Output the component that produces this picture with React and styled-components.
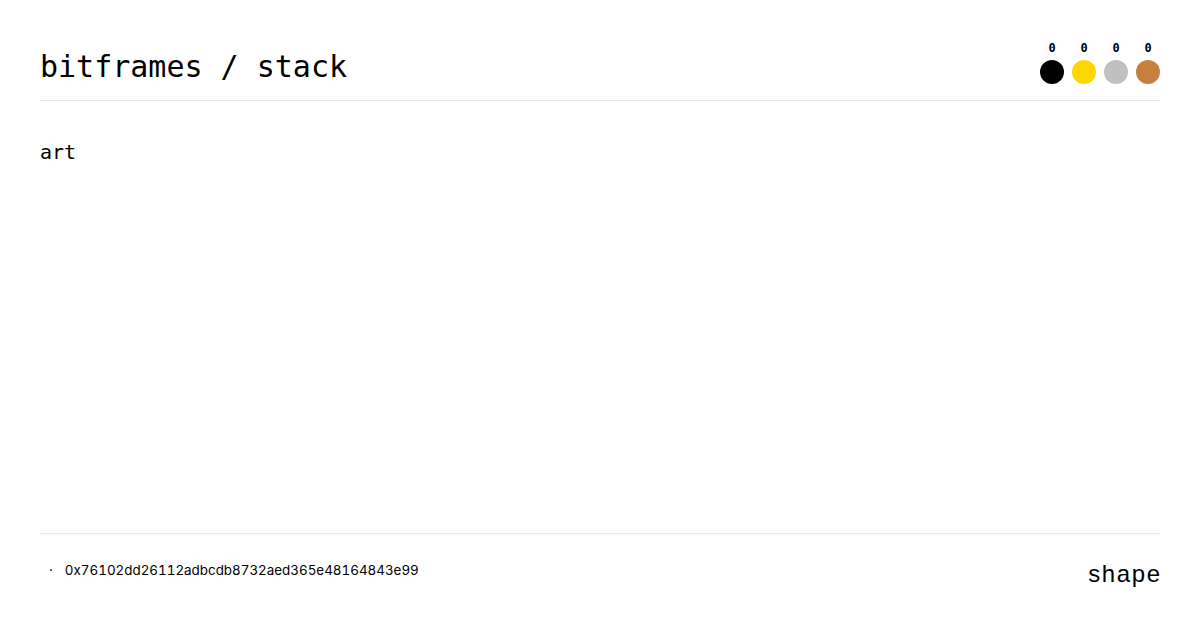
import React from "react";
import styled, { createGlobalStyle } from "styled-components";

const Global = createGlobalStyle`
  html, body { margin: 0; padding: 0; background: #fff; }
  body { font-family: "DejaVu Sans Mono", monospace; color: #000; }
`;

const Page = styled.div`
  box-sizing: border-box;
  width: 1200px;
  height: 630px;
  padding: 40px;
  display: flex;
  flex-direction: column;
`;

const Header = styled.header`
  display: flex;
  justify-content: space-between;
  align-items: flex-end;
  padding-bottom: 16px;
  border-bottom: 1px solid #e6e6e6;
`;

const Title = styled.h1`
  margin: 0;
  font-family: "DejaVu Sans Mono", "Liberation Mono", monospace;
  font-weight: 400;
  font-size: 30px;
  line-height: 34px;
  color: #000;
`;

const Swatches = styled.div`
  display: flex;
  gap: 8px;
`;

const Swatch = styled.div`
  display: flex;
  flex-direction: column;
  align-items: center;
  gap: 4px;
`;

const Count = styled.span`
  font-family: "DejaVu Sans Mono", monospace;
  font-size: 12px;
  line-height: 16px;
  font-weight: 700;
  color: #000;
`;

const Dot = styled.span`
  width: 24px;
  height: 24px;
  border-radius: 50%;
  background: ${(p) => p.$color};
`;

const Content = styled.main`
  flex: 1;
  padding-top: 39px;
`;

const Tag = styled.span`
  font-family: "DejaVu Sans Mono", monospace;
  font-size: 20px;
  line-height: 24px;
  color: #000;
`;

const Footer = styled.footer`
  display: flex;
  justify-content: space-between;
  align-items: flex-start;
  border-top: 1px solid #e6e6e6;
  padding: 26px 0 2px;
`;

const Address = styled.div`
  display: flex;
  align-items: center;
  gap: 12px;
  padding-left: 9px;
  font-family: Inter, sans-serif;
  font-size: 13.4px;
  line-height: 20px;
  color: #000;
  font-variant-numeric: tabular-nums;
`;

const Brand = styled.span`
  font-family: "Liberation Sans", Arial, sans-serif;
  font-size: 24px;
  line-height: 28px;
  letter-spacing: 1.6px;
  margin-right: -1.6px;
  color: #000;
`;

const colors = ["#000000", "#FFD700", "#C0C0C0", "#C4803C"];

export default function App() {
  return (
    <>
      <Global />
      <Page>
        <Header>
          <Title>bitframes / stack</Title>
          <Swatches>
            {colors.map((c) => (
              <Swatch key={c}>
                <Count>0</Count>
                <Dot $color={c} />
              </Swatch>
            ))}
          </Swatches>
        </Header>
        <Content>
          <Tag>art</Tag>
        </Content>
        <Footer>
          <Address>
            <span>·</span>
            <span>0x76102dd26112adbcdb8732aed365e48164843e99</span>
          </Address>
          <Brand>shape</Brand>
        </Footer>
      </Page>
    </>
  );
}
